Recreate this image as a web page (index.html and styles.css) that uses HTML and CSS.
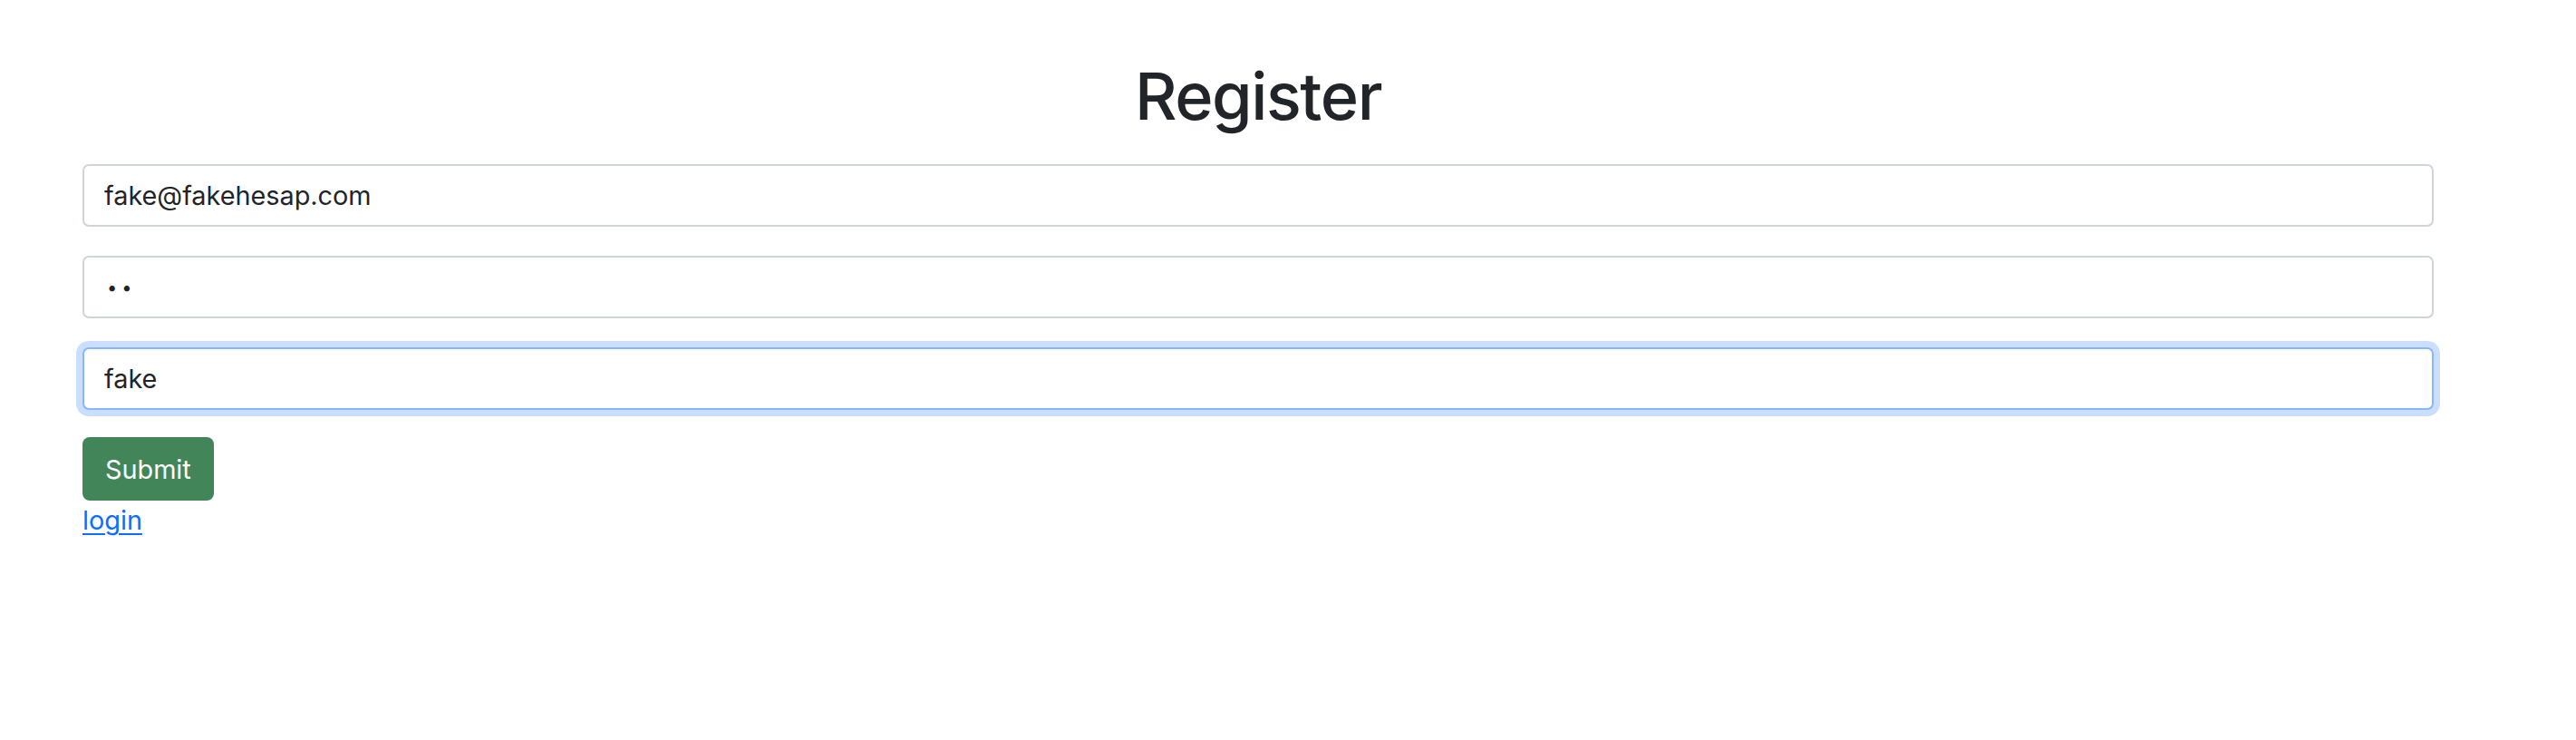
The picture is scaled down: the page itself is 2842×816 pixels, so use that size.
FILE: index.html
```html
<!DOCTYPE html>
<html lang="en">
<head>
<meta charset="utf-8">
<title>Register</title>
<link rel="stylesheet" href="styles.css">
</head>
<body>
<main class="page">
  <h1 class="title">Register</h1>
  <form class="form" onsubmit="return false">
    <input class="field" type="email" value="fake@fakehesap.com">
    <input class="field field-password" type="password" value="12">
    <input class="field field-focus" type="text" value="fake">
    <button class="btn-submit" type="submit">Submit</button>
  </form>
  <a class="link" href="#">login</a>
</main>
</body>
</html>
```
FILE: styles.css
```css
* { box-sizing: border-box; }
html, body { margin: 0; padding: 0; background: #fff; }
body {
  font-family: Inter, "Helvetica Neue", Arial, sans-serif;
  color: #212529;
  font-size: 28.8px;
  line-height: 1.5;
}
.page {
  width: 2594px;
  margin-left: 91px;
  padding-top: 63px;
}
.title {
  margin: 0 0 32px 0;
  text-align: center;
  font-size: 72px;
  font-weight: 500;
  line-height: 1.2;
  letter-spacing: -1.4px;
}
.form {
  display: flex;
  flex-direction: column;
  align-items: flex-start;
}
.field {
  display: block;
  width: 100%;
  height: 69px;
  margin-bottom: 32px;
  padding: 0 22px;
  font-family: inherit;
  font-size: 28.8px;
  color: #212529;
  background: #fff;
  border: 2px solid #ced4da;
  border-radius: 7px;
  outline: none;
}
.field-password {
  font-size: 20px;
  letter-spacing: 5px;
  padding-left: 25px;
}
.field-focus {
  margin-bottom: 30px;
  border-color: #86b7fe;
  box-shadow: 0 0 0 7px rgba(13, 110, 253, 0.22);
}
.btn-submit {
  height: 70px;
  padding: 0 25px;
  font-family: inherit;
  font-size: 28.8px;
  color: #fff;
  background: #428559;
  border: 0;
  border-radius: 8px;
  cursor: pointer;
}
.link {
  display: inline-block;
  color: #0d6efd;
  text-decoration: underline;
  text-underline-offset: 4px;
}
```
